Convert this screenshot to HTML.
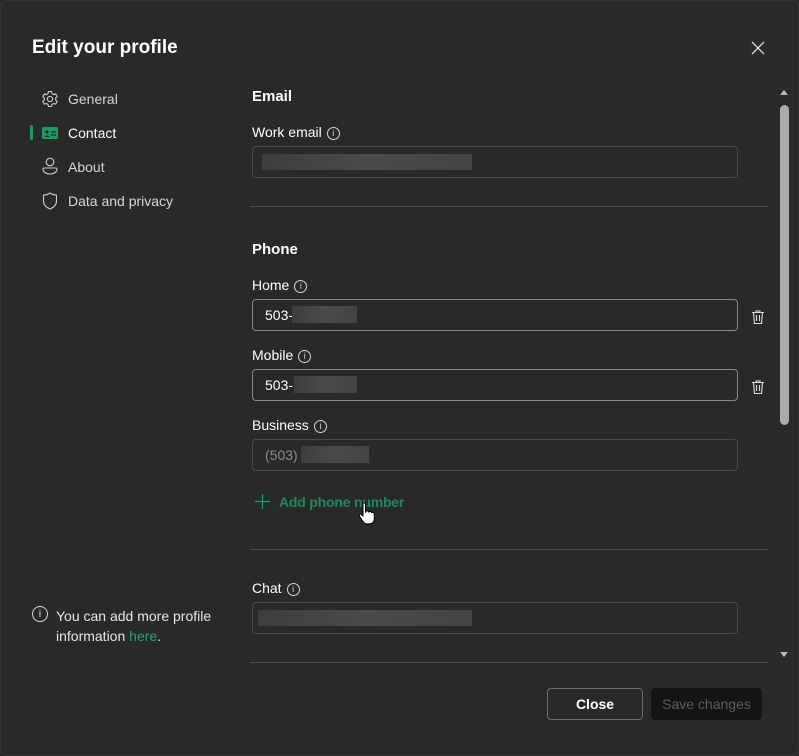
<!DOCTYPE html><html><head><style>
*{margin:0;padding:0;box-sizing:border-box}
body{width:799px;height:756px;background:#292929;font-family:"Liberation Sans",sans-serif;color:#fff;position:relative;overflow:hidden}
.a{position:absolute}
.t{font-size:14px;color:#d6d6d6}
.lbl{font-size:14px;color:#fff}
.in{position:absolute;left:252px;width:486px;height:32px;border:1px solid #4a4a4a;border-radius:4px}
.in.f{border-color:#8a8a8a}
.blur{position:absolute;background:linear-gradient(90deg,#3e3e3e,#4a4a4a,#444);height:16px}
.hr{position:absolute;left:250px;width:518px;height:1px;background:#4a4a4a}
.info{display:inline-block;width:13px;height:13px;border:1px solid #d6d6d6;border-radius:50%;font-size:9px;text-align:center;line-height:11px;vertical-align:1px;margin-left:5px;color:#d6d6d6}
.h{font-size:15px;font-weight:bold}
</style></head><body>
<div class="a" style="left:0;top:0;width:799px;height:756px;border:1px solid #333;border-radius:6px"></div>
<div class="a" style="left:32px;top:37px;font-size:19px;font-weight:bold">Edit your profile</div>
<svg class="a" style="left:751px;top:41px" width="14" height="14"><path d="M1 1L13 13M13 1L1 13" stroke="#ddd" stroke-width="1.3"/></svg>
<svg class="a" style="left:41px;top:90px" width="18" height="18" viewBox="0 0 18 18" fill="none" stroke="#ccc" stroke-width="1.1"><circle cx="9" cy="9" r="2.6"/><path d="M7.5 1.5h3l.5 2 1.7 1 2-.6 1.5 2.6-1.5 1.5v2l1.5 1.5-1.5 2.6-2-.6-1.7 1-.5 2h-3l-.5-2-1.7-1-2 .6-1.5-2.6 1.5-1.5v-2L1.8 6.5 3.3 3.9l2 .6 1.7-1z"/></svg>
<div class="a t" style="left:68px;top:91px">General</div>
<div class="a" style="left:30px;top:125px;width:3px;height:15px;background:#1f9b62;border-radius:2px"></div>
<svg class="a" style="left:42px;top:127px" width="16" height="12"><rect width="16" height="12" rx="1.5" fill="#1f9b62"/><circle cx="5" cy="5" r="1.6" fill="#222"/><path d="M2.5 10c0-2 5-2 5 0z" fill="#222"/><path d="M9 5h5M9 8h5" stroke="#222" stroke-width="1.2"/></svg>
<div class="a" style="left:68px;top:125px;font-size:14px">Contact</div>
<svg class="a" style="left:42px;top:157px" width="16" height="18" fill="none" stroke="#ccc" stroke-width="1.1"><circle cx="8" cy="5" r="3.8"/><path d="M2 11h12a1 1 0 0 1 1 1c0 3-3 5-7 5s-7-2-7-5a1 1 0 0 1 1-1z"/></svg>
<div class="a t" style="left:68px;top:159px">About</div>
<svg class="a" style="left:42px;top:192px" width="16" height="18" fill="none" stroke="#ccc" stroke-width="1.1"><path d="M8 1C6 2.5 4 3 1.5 3v6c0 4 3 6.5 6.5 8 3.5-1.5 6.5-4 6.5-8V3C12 3 10 2.5 8 1z"/></svg>
<div class="a t" style="left:68px;top:193px">Data and privacy</div>
<div class="a" style="left:32px;top:606px;width:16px;height:16px;border:1.2px solid #d6d6d6;border-radius:50%;font-size:11px;text-align:center;line-height:14px;color:#d6d6d6">i</div>
<div class="a t" style="left:56px;top:606px;line-height:20px;color:#e6e6e6">You can add more profile<br>information <span style="color:#2e9e6b">here</span>.</div>
<div class="a h" style="left:252px;top:88px">Email</div>
<div class="a lbl" style="left:252px;top:124px">Work email<span class="info">i</span></div>
<div class="in" style="top:146px"></div>
<div class="blur" style="left:262px;top:154px;width:210px"></div>
<div class="hr" style="top:206px"></div>
<div class="a h" style="left:252px;top:241px">Phone</div>
<div class="a lbl" style="left:252px;top:277px">Home<span class="info">i</span></div>
<div class="in f" style="top:299px"></div>
<div class="a" style="left:265px;top:307px;font-size:14px">503-</div>
<div class="blur" style="left:292px;top:306px;width:65px;height:17px"></div>
<div class="a lbl" style="left:252px;top:347px">Mobile<span class="info">i</span></div>
<div class="in f" style="top:369px"></div>
<div class="a" style="left:265px;top:377px;font-size:14px">503-</div>
<div class="blur" style="left:294px;top:376px;width:63px;height:17px"></div>
<svg class="a" style="left:751px;top:309px" width="14" height="16" fill="none" stroke="#ddd" stroke-width="1.1"><path d="M1 3.5h12M5 3.5V2h4v1.5M2.5 3.5l1 11h7l1-11M5.5 6v6M8.5 6v6"/></svg>
<svg class="a" style="left:751px;top:379px" width="14" height="16" fill="none" stroke="#ddd" stroke-width="1.1"><path d="M1 3.5h12M5 3.5V2h4v1.5M2.5 3.5l1 11h7l1-11M5.5 6v6M8.5 6v6"/></svg>
<div class="a lbl" style="left:252px;top:417px">Business<span class="info">i</span></div>
<div class="in" style="top:439px"></div>
<div class="a" style="left:265px;top:447px;font-size:14px;color:#8a8a8a">(503)</div>
<div class="blur" style="left:301px;top:446px;width:68px;height:17px"></div>
<svg class="a" style="left:255px;top:494px" width="15" height="15"><path d="M7.5 0v15M0 7.5h15" stroke="#1f9b62" stroke-width="1.2"/></svg>
<div class="a" style="left:279px;top:494px;font-size:14px;font-weight:bold;color:#1e8a59;letter-spacing:-0.2px">Add phone number</div>
<svg class="a" style="left:358px;top:502px" width="18" height="24"><path d="M5 2c0-1.5 2.5-1.5 2.5 0v8l1-1c1-.5 2 0 2 1l1-.5c1-.3 2 .3 2 1l1-.2c1 0 1.8.6 1.8 1.6v5c0 3-2 5-5 5H9c-2 0-3-1-4.5-3L1.5 14c-.7-1 .5-2.5 1.8-1.5L5 14z" fill="#fff" stroke="#000" stroke-width="1"/></svg>
<div class="hr" style="top:549px"></div>
<div class="a lbl" style="left:252px;top:580px">Chat<span class="info">i</span></div>
<div class="in" style="top:602px"></div>
<div class="blur" style="left:258px;top:610px;width:214px"></div>
<div class="hr" style="top:662px"></div>
<div class="a" style="left:780px;top:90px;width:0;height:0;border:4px solid transparent;border-bottom:5px solid #bbb;border-top:0"></div>
<div class="a" style="left:780px;top:105px;width:9px;height:320px;background:#ababab;border-radius:5px"></div>
<div class="a" style="left:780px;top:652px;width:0;height:0;border:4px solid transparent;border-top:5px solid #bbb;border-bottom:0"></div>
<div class="a" style="left:547px;top:688px;width:96px;height:32px;border:1px solid #6b6b6b;border-radius:4px;font-size:14px;font-weight:bold;text-align:center;line-height:30px">Close</div>
<div class="a" style="left:651px;top:688px;width:111px;height:32px;background:#141414;border-radius:4px;font-size:14px;color:#5c5c5c;text-align:center;line-height:32px">Save changes</div>
</body></html>
